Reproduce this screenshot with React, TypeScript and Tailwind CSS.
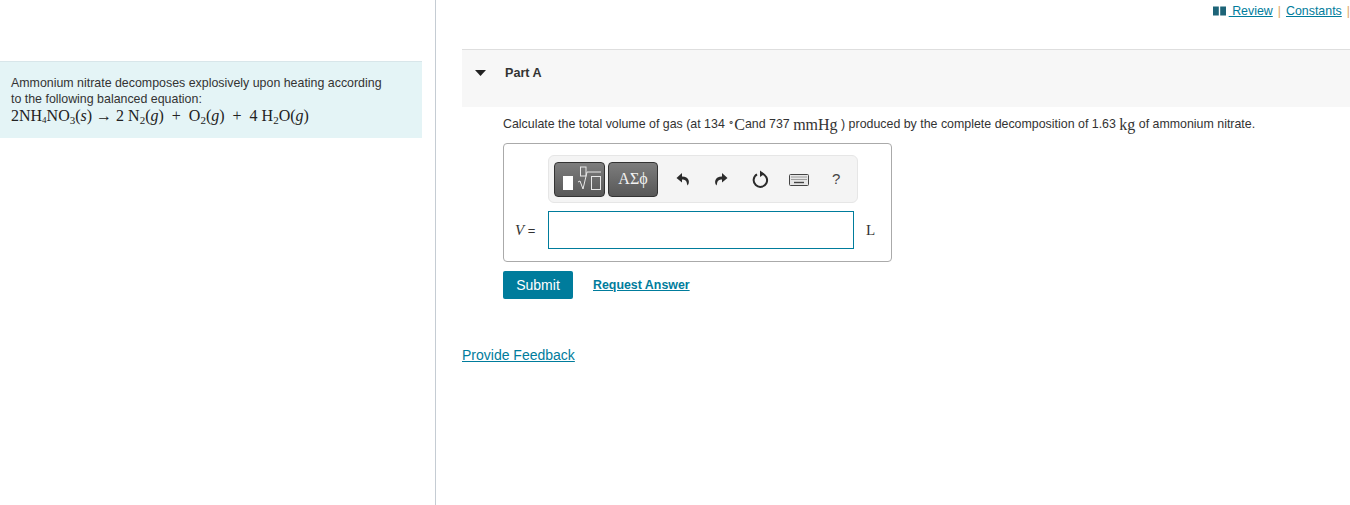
const sans = 'font-["Liberation_Sans",Arial,sans-serif]'
const serif = 'font-["Liberation_Serif","Times_New_Roman",serif]'

function BookIcon() {
  return (
    <svg width="13" height="10" viewBox="0 0 13 10" className="mr-[3px]">
      <path d="M0 0.5h5.8v9H0zM7.2 0.5H13v9H7.2z" fill="#1d6478" />
    </svg>
  )
}

function MathIcon() {
  return (
    <svg width="48" height="28" viewBox="0 0 48 28">
      <rect x="7" y="11" width="10" height="14" fill="#fff" />
      <rect x="24.5" y="2" width="5.5" height="9" fill="none" stroke="#e8e8e8" strokeWidth="1" />
      <path d="M22 17l2 -1 3 8 4 -17h14" fill="none" stroke="#e8e8e8" strokeWidth="1" />
      <rect x="35.5" y="11.5" width="9" height="13" fill="none" stroke="#e8e8e8" strokeWidth="1" />
    </svg>
  )
}

function Undo({ flip }: { flip?: boolean }) {
  return (
    <svg width="16" height="16" viewBox="0 0 16 16" className={flip ? '-scale-x-100' : ''}>
      <path
        d="M7 2L1.5 7 7 11.5V8.6c3 0 4.6 1 5 4.4l.6 1.5c1.2-1.6 1.6-3.4 1-5.2C13 7 10.6 5.6 7 5.5z"
        fill="#2b2b2b"
      />
    </svg>
  )
}

function Reset() {
  return (
    <svg width="18" height="18" viewBox="0 0 18 18">
      <path d="M10.5 3.6A6.7 6.7 0 1 1 6 4.4" fill="none" stroke="#2b2b2b" strokeWidth="2" />
      <path d="M9 0.5l4.5 3.3L9 7z" fill="#2b2b2b" />
    </svg>
  )
}

function Keyboard() {
  return (
    <svg width="20" height="12" viewBox="0 0 20 12">
      <rect x="0.5" y="0.5" width="19" height="11" rx="1" fill="#e6e6e6" stroke="#444" />
      <path d="M2.5 3h15M2.5 5.5h15" stroke="#555" strokeWidth="1.2" strokeDasharray="1 1" />
      <path d="M5 8.5h10" stroke="#444" strokeWidth="1.4" />
    </svg>
  )
}

export default function App() {
  return (
    <div className={`${sans} flex h-[505px] w-[1350px] overflow-hidden bg-white text-[#333]`}>
      {/* Left intro */}
      <div className="w-[436px] shrink-0 border-r border-[#c5ccd3] pt-[61px]">
        <div className="h-[77px] w-[422px] border-t border-[#d8e6ea] bg-[#e4f4f6] pl-[11px] pt-[13px] text-[12.4px] leading-[16px]">
          <p>Ammonium nitrate decomposes explosively upon heating according</p>
          <p>to the following balanced equation:</p>
          <p className={`${serif} text-[16px] leading-[18px] text-[#222]`}>
            2NH<sub className="align-baseline text-[9px]">4</sub>NO<sub className="align-baseline text-[11px]">3</sub>
            (<i>s</i>) → 2 N<sub className="align-baseline text-[11px]">2</sub>(<i>g</i>) &nbsp;+&nbsp; O
            <sub className="align-baseline text-[11px]">2</sub>(<i>g</i>) &nbsp;+&nbsp; 4 H
            <sub className="align-baseline text-[11px]">2</sub>O(<i>g</i>)
          </p>
        </div>
      </div>

      {/* Right main */}
      <div className="min-w-0 flex-1 pl-[26px]">
        <div className="flex h-[49px] items-start justify-end pt-[3px] text-[12.4px] leading-[16px] text-[#007c9c]">
          <a className="flex items-center underline">
            <BookIcon />
            <span>&nbsp;Review</span>
          </a>
          <span className="mx-[5px] text-[#e0a868]">|</span>
          <a className="underline">Constants</a>
          <span className="ml-[5px] text-[#e0a868]">|</span>
        </div>

        <div className="flex h-[58px] items-start border-t border-[#dedede] bg-[#f7f7f7] pl-[13px] pt-[15px]">
          <svg width="11" height="6" viewBox="0 0 11 6" className="mt-[5px]">
            <path d="M0 0h11L5.5 6z" fill="#222" />
          </svg>
          <span className="ml-[19px] text-[12.6px] font-bold leading-[16px] text-[#333]">Part A</span>
        </div>

        <div className="pl-[41px]">
          <p className="mt-[8px] flex h-[19px] items-center whitespace-pre text-[12.4px] text-[#333]">
            Calculate the total volume of gas (at 134{' '}
            <span className={`${serif} text-[16px]`}>
              <sup className="text-[10px]">∘</sup>C
            </span>{' '}
            and 737 <span className={`${serif} text-[16px]`}>mmHg</span> ) produced by the complete decomposition of
            1.63 <span className={`${serif} text-[16px]`}>kg</span> of ammonium nitrate.
          </p>

          {/* Answer box */}
          <div className="mt-[9px] h-[119px] w-[389px] rounded-[4px] border border-[#aaa] pl-[44px] pt-[11px]">
            <div className="relative flex h-[48px] w-[310px] items-center rounded-[6px] border border-[#e6e6e6] bg-[#f4f4f4] pl-[5px]">
              <div className="flex h-[35px] w-[51px] items-center justify-center rounded-[4px] border border-[#333] bg-gradient-to-b from-[#7d7d7d] to-[#585858]">
                <MathIcon />
              </div>
              <div
                className={`${serif} ml-[3px] flex h-[35px] w-[50px] items-center justify-center rounded-[4px] border border-[#333] bg-gradient-to-b from-[#7d7d7d] to-[#585858] text-[16px] text-[#f2f2f2]`}
              >
                ΑΣϕ
              </div>
              <div className="ml-[17px] flex items-center">
                <Undo />
              </div>
              <div className="ml-[22px] flex items-center">
                <Undo flip />
              </div>
              <div className="ml-[22px] flex items-center">
                <Reset />
              </div>
              <div className="ml-[20px] flex items-center pt-[2px]">
                <Keyboard />
              </div>
              <span className="ml-[23px] text-[15px] text-[#444]">?</span>
            </div>

            <div className="relative mt-[8px] flex h-[38px] items-center">
              <span className="absolute -left-[33px] text-[13px] text-[#333]">
                <i className={`${serif} text-[15px]`}>V</i> =
              </span>
              <div className="h-[38px] w-[306px] border border-[#007c9c] bg-white" />
              <span className={`${serif} ml-[12px] text-[15px] text-[#333]`}>L</span>
            </div>
          </div>

          <div className="mt-[9px] flex items-center">
            <button className="h-[28px] w-[70px] rounded-[2px] bg-[#007c9c] text-[14px] text-white">Submit</button>
            <a className="ml-[20px] text-[12.4px] font-bold text-[#007c9c] underline">Request Answer</a>
          </div>
        </div>

        <a className="mt-[47px] block text-[14px] leading-[18px] text-[#007c9c] underline">Provide Feedback</a>
      </div>
    </div>
  )
}
